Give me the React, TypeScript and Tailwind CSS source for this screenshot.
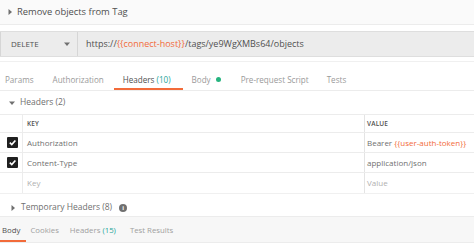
import React from 'react';

const Caret = ({ down = false }: { down?: boolean }) => (
  <svg width="6" height="6" viewBox="0 0 6 6" className="shrink-0">
    {down ? <path d="M0 1.5 L6 1.5 L3 5 Z" fill="#707070" /> : <path d="M1.5 0 L5 3 L1.5 6 Z" fill="#707070" />}
  </svg>
);

const Check = () => (
  <div className="w-[11px] h-[11px] bg-[#1f1f1f] rounded-[1px] flex items-center justify-center">
    <svg width="9" height="9" viewBox="0 0 10 10">
      <path d="M2 5.2 L4.2 7.3 L8.2 2.8" stroke="#fff" strokeWidth="1.8" fill="none" />
    </svg>
  </div>
);

const rows = [
  { key: 'KEY', value: 'VALUE', head: true },
  { key: 'Authorization', value: 'auth', checked: true },
  { key: 'Content-Type', value: 'application/json', checked: true },
  { key: 'Key', value: 'Value', placeholder: true },
];

const App = () => {
  const font = { fontFamily: '"Open Sans", "Noto Sans", sans-serif' };

  return (
    <div className="w-[474px] h-[249px] bg-white overflow-hidden text-[#505050]" style={font}>
      {/* Title */}
      <div className="h-[25px] bg-[#fafafa] border-b border-[#ececec] flex items-center gap-[4px] pl-[7px]">
        <Caret />
        <span className="text-[9.4px] text-[#505050]">Remove objects from Tag</span>
      </div>

      {/* URL bar */}
      <div className="pt-[6px] pb-[4px] border-b border-[#f0f0f0]">
        <div className="h-[26px] flex bg-[#ececec] border-y border-[#dedede]">
          <div className="w-[78px] flex items-center justify-between pl-[10px] pr-[7px] border-r border-[#d6d6d6] border-l">
            <span className="text-[8px] text-[#505050]">DELETE</span>
            <Caret down />
          </div>
          <div className="flex items-center pl-[8px] text-[9px] text-[#505050]">
            https://<span className="text-[#f26b3a]">{'{{connect-host}}'}</span>/tags/ye9WgXMBs64/objects
          </div>
        </div>
      </div>

      {/* Request tabs */}
      <div className="h-[29px] flex items-end border-b border-[#ececec] text-[8.1px] text-[#9a9a9a] pl-[5px]">
        <div className="pb-[4px]">Params</div>
        <div className="pb-[4px] ml-[19px]">Authorization</div>
        <div className="pb-[2px] border-b-2 border-[#f26b3a] pl-[9px] pr-[12px] ml-[10px] text-[#505050]">
          Headers <span className="text-[#26a69a]">(10)</span>
        </div>
        <div className="pb-[4px] ml-[9px] flex items-center gap-[5px]">
          Body <span className="w-[5px] h-[5px] rounded-full bg-[#26b47f] inline-block" />
        </div>
        <div className="pb-[4px] ml-[20px]">Pre-request Script</div>
        <div className="pb-[4px] ml-[18px]">Tests</div>
      </div>

      {/* Headers section */}
      <div className="h-[23px] flex items-center gap-[5px] pl-[9px] text-[8.5px] text-[#707070]">
        <Caret down />
        <span>Headers (2)</span>
      </div>

      <div className="border-t border-[#ececec]">
        {rows.map((r, i) => {
          const txt = r.head
            ? 'text-[6.5px] font-semibold text-[#505050] tracking-wide'
            : r.placeholder
            ? 'text-[8px] text-[#b0b0b0]'
            : 'text-[8px] text-[#707070]';
          return (
            <div key={i} className={`flex ${r.head ? 'h-[18px]' : 'h-[20px]'} ${i < 3 ? 'border-b border-[#ececec]' : ''}`}>
              <div className="w-[23px] flex items-center justify-center border-r border-[#ececec] pl-[3px]">
                {r.checked && <Check />}
              </div>
              <div className={`w-[342px] flex items-center pl-[4px] border-r border-[#e4e4e4] ${txt}`}>{r.key}</div>
              <div className={`flex-1 flex items-center pl-[2px] whitespace-nowrap ${txt}`}>
                {r.value === 'auth' ? (
                  <>
                    Bearer&nbsp;<span className="text-[#f26b3a]">{'{{user-auth-token}}'}</span>
                  </>
                ) : (
                  r.value
                )}
              </div>
            </div>
          );
        })}
      </div>

      {/* Temporary headers */}
      <div className="h-[23px] flex items-center gap-[5px] pl-[10px] pt-[5px] text-[8.5px] text-[#707070] border-t border-[#f0f0f0]">
        <Caret />
        <span>Temporary Headers (8)</span>
        <span className="w-[8px] h-[8px] rounded-full bg-[#707070] ml-[2px] flex items-center justify-center text-white text-[6px] font-bold leading-none">i</span>
      </div>

      {/* Response tabs */}
      <div className="h-[27px] bg-[#f7f7f7] border-y border-[#ececec] flex items-end text-[7.8px] text-[#a0a0a0]">
        <div className="pb-[3px] pl-[2px] pr-[6px] border-b-2 border-[#f26b3a] text-[#505050]">Body</div>
        <div className="pb-[5px] ml-[4px]">Cookies</div>
        <div className="pb-[5px] ml-[11px]">
          Headers <span className="text-[#26a69a]">(15)</span>
        </div>
        <div className="pb-[5px] ml-[14px]">Test Results</div>
      </div>
    </div>
  );
};

export default App;
